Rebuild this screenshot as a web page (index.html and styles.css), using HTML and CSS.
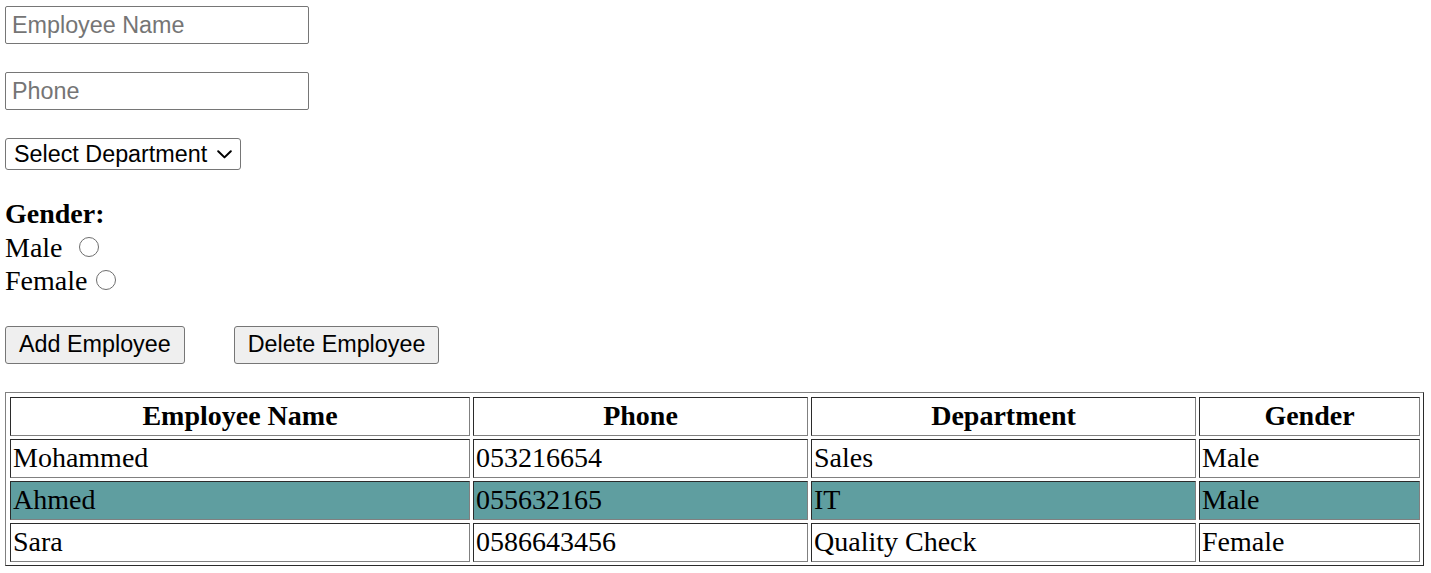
FILE: index.html
```html
<!DOCTYPE html>
<html lang="en">
<head>
<meta charset="utf-8">
<title>Employees</title>
<link rel="stylesheet" href="styles.css">
</head>
<body>
<main class="page">
  <form class="form">
    <input class="field" type="text" placeholder="Employee Name">
    <input class="field" type="text" placeholder="Phone">
    <label class="select-box">
      <select class="select">
        <option>Select Department</option>
        <option>Sales</option>
        <option>IT</option>
        <option>Quality Check</option>
      </select>
      <svg class="chevron" width="15" height="9" viewBox="0 0 15 9" aria-hidden="true"><path d="M1.2 1.2 L7.5 7.4 L13.8 1.2" fill="none" stroke="#000" stroke-width="2" stroke-linecap="round" stroke-linejoin="round"/></svg>
    </label>
    <div class="gender">
      <div class="gender-title">Gender:</div>
      <label class="gender-line">Male <input class="radio" type="radio" name="gender" value="male"></label>
      <label class="gender-line">Female<input class="radio" type="radio" name="gender" value="female"></label>
    </div>
    <div class="actions">
      <button class="btn" type="button">Add Employee</button>
      <button class="btn" type="button">Delete Employee</button>
    </div>
  </form>
  <table class="table">
    <colgroup>
      <col class="c-name">
      <col class="c-phone">
      <col class="c-dept">
      <col class="c-gender">
    </colgroup>
    <thead>
      <tr><th>Employee Name</th><th>Phone</th><th>Department</th><th>Gender</th></tr>
    </thead>
    <tbody>
      <tr><td>Mohammed</td><td>053216654</td><td>Sales</td><td>Male</td></tr>
      <tr class="selected"><td>Ahmed</td><td>055632165</td><td>IT</td><td>Male</td></tr>
      <tr><td>Sara</td><td>0586643456</td><td>Quality Check</td><td>Female</td></tr>
    </tbody>
  </table>
</main>
</body>
</html>
```
FILE: styles.css
```css
html, body {
  margin: 0;
  padding: 0;
  background: #fff;
}
body {
  font-family: "Liberation Serif", "Times New Roman", serif;
  font-size: 28px;
  color: #000;
}
.page {
  padding: 6px 7px 0 5px;
}
.form {
  display: flex;
  flex-direction: column;
  align-items: flex-start;
  gap: 28px;
  margin: 0 0 28px;
}
.field {
  box-sizing: border-box;
  width: 304px;
  height: 38px;
  margin: 0;
  padding: 0 6px;
  border: 1px solid #767676;
  border-radius: 2px;
  font-family: "Liberation Sans", Arial, sans-serif;
  font-size: 23.33px;
  color: #000;
  background: #fff;
  outline: none;
}
.field::placeholder {
  color: #757575;
  opacity: 1;
}
.select-box {
  box-sizing: border-box;
  display: inline-flex;
  align-items: center;
  width: 236px;
  height: 32px;
  padding: 0 8px 0 8px;
  border: 1px solid #767676;
  border-radius: 3px;
  background: #fff;
}
.select {
  appearance: none;
  -webkit-appearance: none;
  flex: 1;
  min-width: 0;
  margin: 0;
  padding: 0;
  border: 0;
  background: transparent;
  font-family: "Liberation Sans", Arial, sans-serif;
  font-size: 23.33px;
  color: #000;
  outline: none;
}
.chevron {
  display: block;
  flex: none;
}
.gender {
  display: flex;
  flex-direction: column;
  align-items: flex-start;
  margin-top: -1px;
}
.gender-title,
.gender-line {
  line-height: 33.5px;
  height: 33.5px;
}
.gender-title {
  font-weight: bold;
}
.radio {
  appearance: none;
  -webkit-appearance: none;
  box-sizing: border-box;
  width: 20px;
  height: 20px;
  margin: 0 0 0 9px;
  border: 1.5px solid #6e6e6e;
  border-radius: 50%;
  background: #fff;
  vertical-align: 0;
}
.actions {
  display: flex;
  gap: 49px;
}
.btn {
  box-sizing: border-box;
  height: 38px;
  margin: 0;
  padding: 0 13px;
  border: 1px solid #767676;
  border-radius: 3px;
  background: #efefef;
  font-family: "Liberation Sans", Arial, sans-serif;
  font-size: 23.33px;
  color: #000;
}
.table {
  box-sizing: border-box;
  width: 100%;
  table-layout: fixed;
  border-collapse: separate;
  border-spacing: 3px;
  padding: 1px 0 0 1px;
  border: 1px solid;
  border-color: #808080 #2b2b2b #2b2b2b #808080;
}
.c-name { width: 460px; }
.c-phone { width: 335px; }
.c-dept { width: 385px; }
.c-gender { width: 221px; }
.table th,
.table td {
  box-sizing: border-box;
  height: 39px;
  padding: 1px 2px 3px;
  line-height: 33px;
  border: 1px solid;
  border-color: #2b2b2b #808080 #808080 #2b2b2b;
  white-space: nowrap;
  overflow: hidden;
}
.table th {
  text-align: center;
  font-weight: bold;
}
.table td {
  text-align: left;
}
.selected td {
  background: #5f9ea0;
}
```
